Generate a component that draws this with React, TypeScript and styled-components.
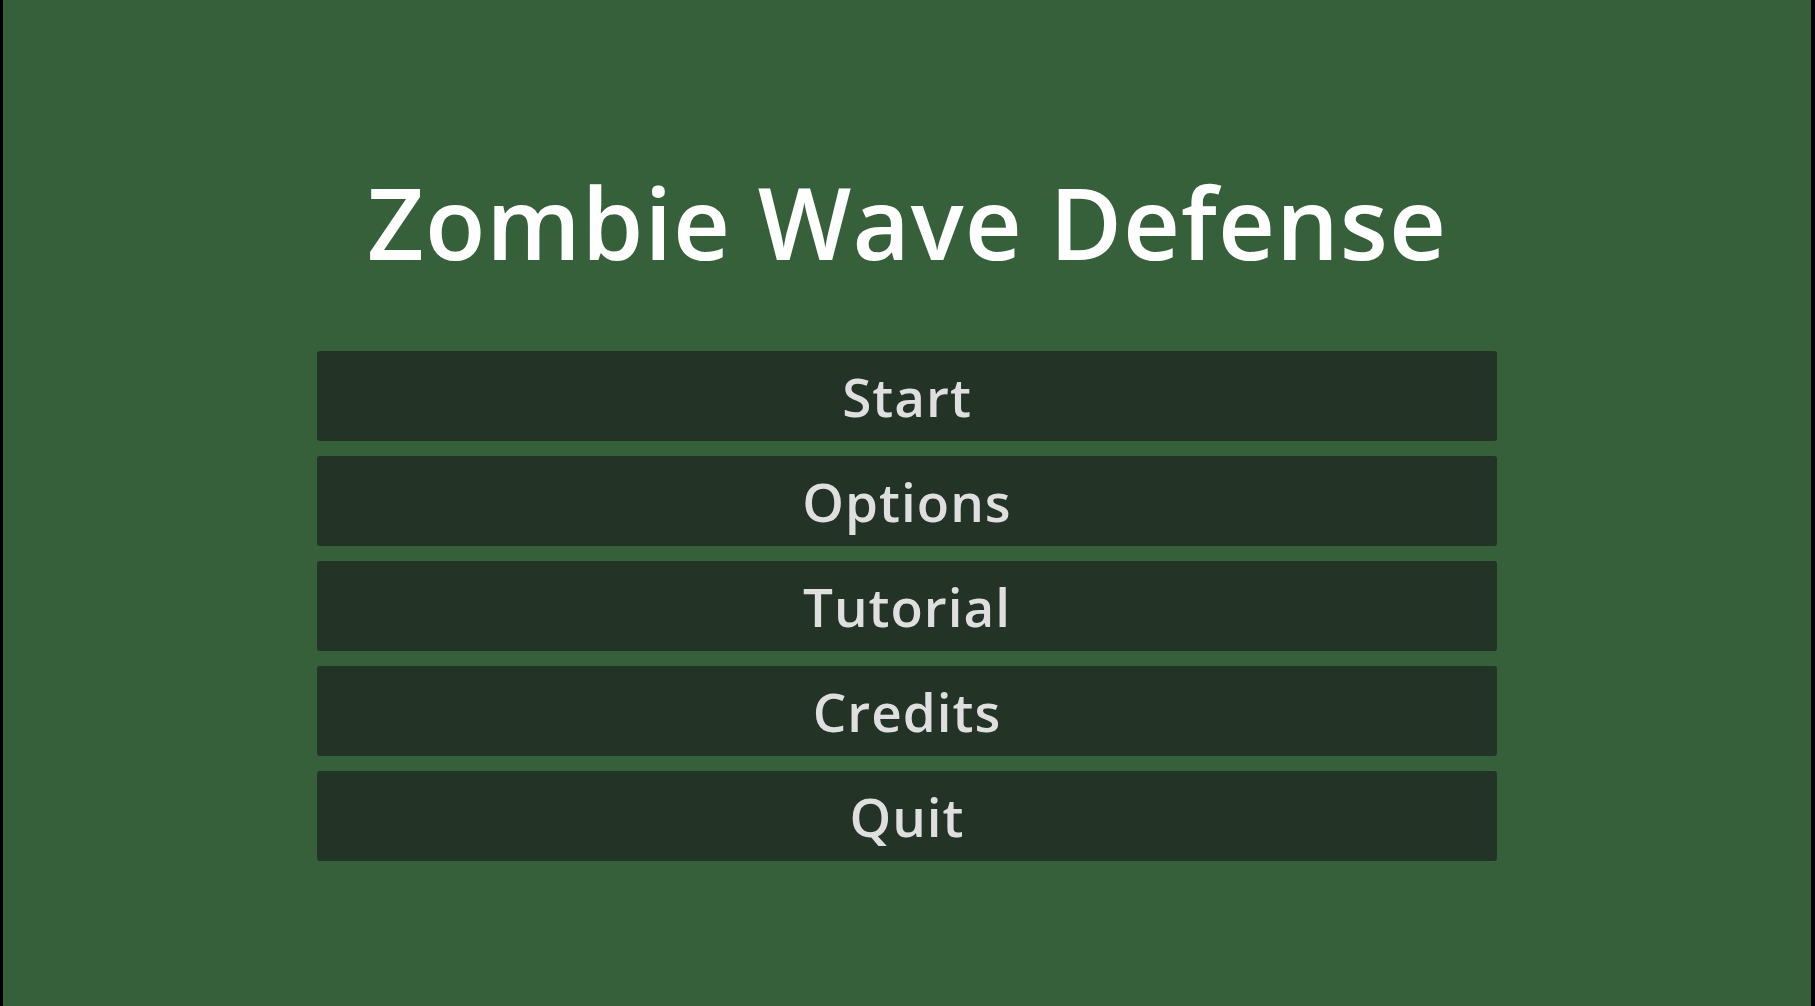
import React from 'react';
import styled, { createGlobalStyle } from 'styled-components';

const items = ['Start', 'Options', 'Tutorial', 'Credits', 'Quit'];

const GlobalStyle = createGlobalStyle`
    html, body {
        margin: 0;
        padding: 0;
        background: #000;
        overflow: hidden;
    }
    #root {
        height: 100vh;
    }
`;

export default function App() {
    return (
        <>
            <GlobalStyle />
            <Screen>
                <Viewport>
                    <Title>Zombie Wave Defense</Title>
                    <Menu>
                        {items.map((label) => (
                            <MenuButton key={label} type="button">
                                {label}
                            </MenuButton>
                        ))}
                    </Menu>
                </Viewport>
            </Screen>
        </>
    );
}

const Screen = styled.div`
    height: 100%;
    display: flex;
    padding: 0 4px 0 3px;
    box-sizing: border-box;
`;

const Viewport = styled.main`
    flex: 1;
    background: #35603a;
    display: flex;
    flex-direction: column;
    align-items: center;
    padding-top: 172px;
    font-family: 'Open Sans', 'Noto Sans', sans-serif;
`;

const Title = styled.h1`
    margin: 0;
    font-size: 99px;
    line-height: 1;
    font-weight: 600;
    letter-spacing: 1px;
    color: #ffffff;
`;

const Menu = styled.nav`
    margin-top: 80px;
    width: 1180px;
    display: flex;
    flex-direction: column;
    gap: 15px;
`;

const MenuButton = styled.button`
    height: 90px;
    border: none;
    border-radius: 3px;
    background: #233326;
    color: #dfdfdf;
    font-family: inherit;
    font-size: 53px;
    font-weight: 600;
    letter-spacing: 1px;
    line-height: 1;
    display: flex;
    align-items: center;
    justify-content: center;
    padding: 0;
    cursor: pointer;
`;
